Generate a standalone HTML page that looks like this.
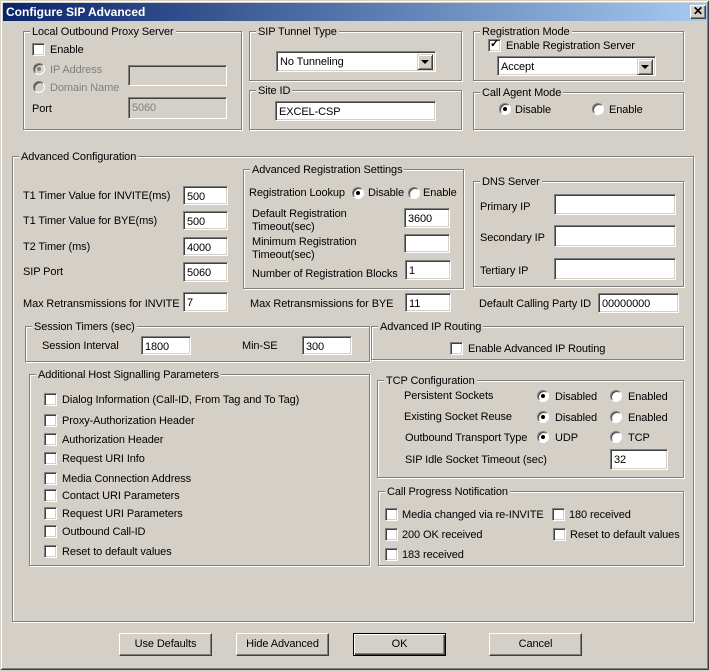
<!DOCTYPE html>
<html><head><meta charset="utf-8"><style>
*{box-sizing:border-box;margin:0;padding:0}
body{width:710px;height:671px;background:#d4d0c8;font-family:"Liberation Sans",Arial,sans-serif;font-size:11px;letter-spacing:-0.1px;color:#000;position:relative;overflow:hidden}
.win{position:absolute;left:0;top:0;width:710px;height:671px;border:1px solid #d4d0c8;box-shadow:inset -1px -1px 0 #404040,inset 1px 1px 0 #fff,inset -2px -2px 0 #808080}
.title{position:absolute;left:3px;top:3px;width:704px;height:18px;background:linear-gradient(90deg,#0a246a,#a6caf0);color:#fff;font-weight:bold;font-size:12px;letter-spacing:0;padding:2px 0 0 3px}
.x{position:absolute;left:690px;top:5px;width:16px;height:14px;background:#d4d0c8;border:1px solid;border-color:#fff #404040 #404040 #fff;box-shadow:inset -1px -1px 0 #808080;font-size:12px;font-weight:bold;line-height:11px;text-align:center;color:#000}
.a{position:absolute;white-space:nowrap;margin-top:2px}
.g{position:absolute;border:1px solid #808080;box-shadow:inset 1px 1px 0 #fff,1px 1px 0 #fff}
.g>span{position:absolute;top:-7px;left:6px;background:#d4d0c8;padding:0 2px;white-space:nowrap;line-height:14px}
.t{position:absolute;background:#fff;border:1px solid;border-color:#808080 #fff #fff #808080;box-shadow:inset 1px 1px 0 #404040,inset -1px -1px 0 #d4d0c8;padding:3px 0 0 3px;line-height:14px;white-space:nowrap}
.t.dis{background:#d4d0c8;color:#808080}
.c{position:absolute;width:13px;height:13px;background:#fff;border:1px solid;border-color:#808080 #fff #fff #808080;box-shadow:inset 1px 1px 0 #404040,inset -1px -1px 0 #d4d0c8}
.r{position:absolute;width:12px;height:12px;border-radius:50%;background:#fff;border:1px solid;border-color:#808080 #fff #fff #808080;box-shadow:inset 1px 1px 0 #404040}
.r.on::after{content:"";position:absolute;left:3px;top:3px;width:4px;height:4px;border-radius:50%;background:#000}
.r.dis{background:#d4d0c8}
.r.dis.on::after{background:#808080}
.dd{position:absolute;width:16px;height:16px;top:2px;right:2px;background:#d4d0c8;border:1px solid;border-color:#d4d0c8 #404040 #404040 #d4d0c8;box-shadow:inset 1px 1px 0 #fff,inset -1px -1px 0 #808080}
.dd::after{content:"";position:absolute;left:3px;top:5px;border-left:4px solid transparent;border-right:4px solid transparent;border-top:4px solid #000}
.b{position:absolute;height:23px;width:93px;background:#d4d0c8;border:1px solid;border-color:#fff #404040 #404040 #fff;box-shadow:inset -1px -1px 0 #808080;text-align:center;line-height:20px}
.b.def{border:1px solid #000;box-shadow:inset 1px 1px 0 #fff,inset -1px -1px 0 #404040,inset -2px -2px 0 #808080}
.gr{color:#808080}
</style></head><body>
<div class="win"></div>
<div class="title">Configure SIP Advanced</div>
<div class="x">✕</div>

<div class="g" style="left:23px;top:31px;width:219px;height:99px"><span>Local Outbound Proxy Server</span></div>
<div class="c" style="left:32px;top:43px"></div><div class="a" style="left:50px;top:42px">Enable</div>
<div class="r dis on" style="left:33px;top:63px"></div><div class="a gr" style="left:50px;top:62px">IP Address</div>
<div class="r dis" style="left:33px;top:81px"></div><div class="a gr" style="left:50px;top:80px">Domain Name</div>
<div class="t dis" style="left:128px;top:65px;width:99px;height:21px"></div>
<div class="a" style="left:32px;top:101px">Port</div>
<div class="t dis" style="left:128px;top:97px;width:99px;height:22px">5060</div>

<div class="g" style="left:249px;top:31px;width:213px;height:50px"><span>SIP Tunnel Type</span></div>
<div class="t" style="left:276px;top:51px;width:160px;height:21px">No Tunneling<div class="dd"></div></div>
<div class="g" style="left:249px;top:90px;width:213px;height:40px"><span>Site ID</span></div>
<div class="t" style="left:275px;top:101px;width:161px;height:20px">EXCEL-CSP</div>

<div class="g" style="left:473px;top:31px;width:211px;height:50px"><span>Registration Mode</span></div>
<div class="c" style="left:488px;top:39px"></div><div class="a" style="left:490px;top:35px;font-weight:bold">✓</div>
<div class="a" style="left:506px;top:38px">Enable Registration Server</div>
<div class="t" style="left:497px;top:56px;width:159px;height:20px">Accept<div class="dd"></div></div>
<div class="g" style="left:473px;top:92px;width:211px;height:38px"><span>Call Agent Mode</span></div>
<div class="r on" style="left:499px;top:103px"></div><div class="a" style="left:515px;top:102px">Disable</div>
<div class="r" style="left:592px;top:103px"></div><div class="a" style="left:609px;top:102px">Enable</div>

<div class="g" style="left:12px;top:156px;width:682px;height:466px"><span>Advanced Configuration</span></div>
<div class="a" style="left:23px;top:188px">T1 Timer Value for INVITE(ms)</div>
<div class="t" style="left:183px;top:186px;width:45px;height:19px">500</div>
<div class="a" style="left:23px;top:213px">T1 Timer Value for BYE(ms)</div>
<div class="t" style="left:183px;top:211px;width:45px;height:19px">500</div>
<div class="a" style="left:23px;top:239px">T2 Timer (ms)</div>
<div class="t" style="left:183px;top:237px;width:45px;height:19px">4000</div>
<div class="a" style="left:23px;top:264px">SIP Port</div>
<div class="t" style="left:183px;top:262px;width:45px;height:20px">5060</div>
<div class="a" style="left:23px;top:296px">Max Retransmissions for INVITE</div>
<div class="t" style="left:183px;top:292px;width:45px;height:20px">7</div>

<div class="g" style="left:243px;top:169px;width:221px;height:120px"><span>Advanced Registration Settings</span></div>
<div class="a" style="left:249px;top:185px">Registration Lookup</div>
<div class="r on" style="left:352px;top:187px"></div><div class="a" style="left:368px;top:185px">Disable</div>
<div class="r" style="left:408px;top:187px"></div><div class="a" style="left:423px;top:185px">Enable</div>
<div class="a" style="left:252px;top:206px;line-height:13px">Default Registration<br>Timeout(sec)</div>
<div class="t" style="left:404px;top:208px;width:46px;height:20px">3600</div>
<div class="a" style="left:252px;top:234px;line-height:13px">Minimum Registration<br>Timeout(sec)</div>
<div class="t" style="left:404px;top:234px;width:46px;height:19px"></div>
<div class="a" style="left:252px;top:266px">Number of Registration Blocks</div>
<div class="t" style="left:405px;top:260px;width:46px;height:20px">1</div>
<div class="a" style="left:250px;top:296px">Max Retransmissions for BYE</div>
<div class="t" style="left:405px;top:293px;width:46px;height:19px">11</div>

<div class="g" style="left:473px;top:181px;width:211px;height:106px"><span>DNS Server</span></div>
<div class="a" style="left:480px;top:199px">Primary IP</div>
<div class="t" style="left:554px;top:194px;width:122px;height:21px"></div>
<div class="a" style="left:480px;top:230px">Secondary IP</div>
<div class="t" style="left:554px;top:225px;width:122px;height:22px"></div>
<div class="a" style="left:480px;top:263px">Tertiary IP</div>
<div class="t" style="left:554px;top:258px;width:122px;height:22px"></div>
<div class="a" style="left:479px;top:296px">Default Calling Party ID</div>
<div class="t" style="left:598px;top:293px;width:81px;height:20px">00000000</div>

<div class="g" style="left:25px;top:326px;width:345px;height:36px"><span>Session Timers (sec)</span></div>
<div class="a" style="left:42px;top:338px">Session Interval</div>
<div class="t" style="left:141px;top:336px;width:50px;height:19px">1800</div>
<div class="a" style="left:242px;top:338px">Min-SE</div>
<div class="t" style="left:302px;top:336px;width:50px;height:19px">300</div>

<div class="g" style="left:371px;top:326px;width:313px;height:34px"><span>Advanced IP Routing</span></div>
<div class="c" style="left:450px;top:342px"></div><div class="a" style="left:468px;top:341px">Enable Advanced IP Routing</div>

<div class="g" style="left:29px;top:374px;width:341px;height:192px"><span>Additional Host Signalling Parameters</span></div>
<div class="c" style="left:44px;top:393px"></div><div class="a" style="left:62px;top:392px">Dialog Information (Call-ID, From Tag and To Tag)</div>
<div class="c" style="left:44px;top:414px"></div><div class="a" style="left:62px;top:413px">Proxy-Authorization Header</div>
<div class="c" style="left:44px;top:433px"></div><div class="a" style="left:62px;top:432px">Authorization Header</div>
<div class="c" style="left:44px;top:452px"></div><div class="a" style="left:62px;top:451px">Request URI Info</div>
<div class="c" style="left:44px;top:472px"></div><div class="a" style="left:62px;top:471px">Media Connection Address</div>
<div class="c" style="left:44px;top:489px"></div><div class="a" style="left:62px;top:488px">Contact URI Parameters</div>
<div class="c" style="left:44px;top:507px"></div><div class="a" style="left:62px;top:506px">Request URI Parameters</div>
<div class="c" style="left:44px;top:525px"></div><div class="a" style="left:62px;top:524px">Outbound Call-ID</div>
<div class="c" style="left:44px;top:545px"></div><div class="a" style="left:62px;top:544px">Reset to default values</div>

<div class="g" style="left:377px;top:380px;width:307px;height:98px"><span>TCP Configuration</span></div>
<div class="a" style="left:404px;top:388px">Persistent Sockets</div>
<div class="r on" style="left:537px;top:390px"></div><div class="a" style="left:555px;top:389px">Disabled</div>
<div class="r" style="left:610px;top:390px"></div><div class="a" style="left:628px;top:389px">Enabled</div>
<div class="a" style="left:404px;top:409px">Existing Socket Reuse</div>
<div class="r on" style="left:537px;top:411px"></div><div class="a" style="left:555px;top:410px">Disabled</div>
<div class="r" style="left:610px;top:411px"></div><div class="a" style="left:628px;top:410px">Enabled</div>
<div class="a" style="left:405px;top:430px">Outbound Transport Type</div>
<div class="r on" style="left:537px;top:431px"></div><div class="a" style="left:555px;top:430px">UDP</div>
<div class="r" style="left:610px;top:431px"></div><div class="a" style="left:628px;top:430px">TCP</div>
<div class="a" style="left:405px;top:452px">SIP Idle Socket Timeout (sec)</div>
<div class="t" style="left:610px;top:449px;width:58px;height:21px">32</div>

<div class="g" style="left:378px;top:491px;width:306px;height:75px"><span>Call Progress Notification</span></div>
<div class="c" style="left:385px;top:508px"></div><div class="a" style="left:402px;top:507px">Media changed via re-INVITE</div>
<div class="c" style="left:552px;top:508px"></div><div class="a" style="left:569px;top:507px">180 received</div>
<div class="c" style="left:385px;top:528px"></div><div class="a" style="left:402px;top:527px">200 OK received</div>
<div class="c" style="left:553px;top:528px"></div><div class="a" style="left:570px;top:527px">Reset to default values</div>
<div class="c" style="left:385px;top:548px"></div><div class="a" style="left:402px;top:547px">183 received</div>

<div class="b" style="left:119px;top:633px">Use Defaults</div>
<div class="b" style="left:236px;top:633px">Hide Advanced</div>
<div class="b def" style="left:353px;top:633px">OK</div>
<div class="b" style="left:489px;top:633px">Cancel</div>
</body></html>
